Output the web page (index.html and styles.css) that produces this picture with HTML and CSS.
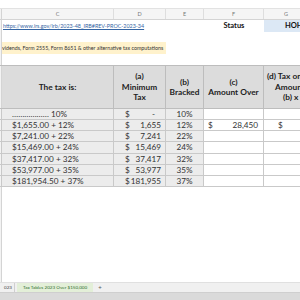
FILE: index.html
```html
<!DOCTYPE html>
<html lang="en">
<head>
    <meta charset="UTF-8">
    <title>Tax Tables 2023 Over $150,000</title>
    <link rel="stylesheet" href="styles.css">
</head>
<body>
    <div class="formula"></div>
    <div class="colheads">
        <div class="edge"></div>
        <div class="ch">C</div>
        <div class="ch">D</div>
        <div class="ch">E</div>
        <div class="ch">F</div>
        <div class="ch last">G</div>
    </div>
    <div class="sheet">
        <div class="row r1">
            <div class="edge"></div>
            <div class="cell link wide">https://www.irs.gov/irb/2023-48_IRB#REV-PROC-2023-34</div>
            <div class="cell"></div>
            <div class="cell status">Status</div>
            <div class="cell hoh">HOH</div>
        </div>
        <div class="row r2"><div class="edge"></div></div>
        <div class="row r3">
            <div class="edge"></div>
            <div class="cell note">vidends, Form 2555, Form 8651 &amp; other alternative tax computations</div>
        </div>
        <div class="row r4"><div class="edge"></div></div>

        <div class="row thead">
            <div class="edge"></div>
            <div class="th">The tax is:</div>
            <div class="th">(a)<br>Minimum<br>Tax</div>
            <div class="th">(b)<br>Bracked</div>
            <div class="th">(c)<br>Amount Over</div>
            <div class="th left">
                <span class="l1">(d) Tax on</span>
                <span class="l2">Amount Over</span>
                <span class="l3">(b) x (c)</span>
            </div>
        </div>

        <div class="row td">
            <div class="edge"></div>
            <div class="c">……………… 10%</div>
            <div class="d acc"><span>$</span><span class="dash">-</span></div>
            <div class="e">10%</div>
            <div class="f"></div>
            <div class="g"></div>
        </div>
        <div class="row td">
            <div class="edge"></div>
            <div class="c">$1,655.00 + 12%</div>
            <div class="d acc"><span>$</span><span>1,655</span></div>
            <div class="e">12%</div>
            <div class="f acc"><span>$</span><span>28,450</span></div>
            <div class="g acc"><span>$</span></div>
        </div>
        <div class="row td">
            <div class="edge"></div>
            <div class="c">$7,241.00 + 22%</div>
            <div class="d acc"><span>$</span><span>7,241</span></div>
            <div class="e">22%</div>
            <div class="f"></div>
            <div class="g"></div>
        </div>
        <div class="row td">
            <div class="edge"></div>
            <div class="c">$15,469.00 + 24%</div>
            <div class="d acc"><span>$</span><span>15,469</span></div>
            <div class="e">24%</div>
            <div class="f"></div>
            <div class="g"></div>
        </div>
        <div class="row td">
            <div class="edge"></div>
            <div class="c">$37,417.00 + 32%</div>
            <div class="d acc"><span>$</span><span>37,417</span></div>
            <div class="e">32%</div>
            <div class="f"></div>
            <div class="g"></div>
        </div>
        <div class="row td">
            <div class="edge"></div>
            <div class="c">$53,977.00 + 35%</div>
            <div class="d acc"><span>$</span><span>53,977</span></div>
            <div class="e">35%</div>
            <div class="f"></div>
            <div class="g"></div>
        </div>
        <div class="row td">
            <div class="edge"></div>
            <div class="c">$181,954.50 + 37%</div>
            <div class="d acc"><span>$</span><span>181,955</span></div>
            <div class="e">37%</div>
            <div class="f"></div>
            <div class="g"></div>
        </div>
        <div class="blank"><div class="edge"></div></div>
    </div>
    <div class="tabs">
        <div class="tab prev">023</div>
        <div class="tab active">Tax Tables 2023 Over $150,000</div>
        <div class="plus">+</div>
    </div>
    <div class="status-bar"></div>
</body>
</html>
```

FILE: styles.css
```css
body { margin: 0; width: 300px; height: 300px; overflow: hidden; background: #ffffff; font-family: Lato, 'Open Sans', sans-serif; color: #222; display: flex; flex-direction: column; }

.formula { height: 9px; border-bottom: 1px solid #e2e2e2; box-sizing: border-box; }

.colheads, .row { display: grid; grid-template-columns: 2px 112px 52px 38px 60px 36px; }
.colheads { height: 11px; background: #f5f5f5; border-bottom: 1px solid #d4d4d4; box-sizing: border-box; }
.colheads .ch { font-size: 5.5px; color: #777; text-align: center; line-height: 10px; border-right: 1px solid #dedede; }
.colheads .last { border-right: none; text-align: left; padding-left: 20px; }
.edge { border-right: 1px solid #d4d4d4; background: #f3f3f3; }

.sheet { display: flex; flex-direction: column; flex: 1; }
.cell { font-size: 6px; white-space: nowrap; line-height: 12px; }
.r1 { height: 12px; }
.r1 .wide { grid-column: 2 / 4; }
.link { color: #3465a4; text-decoration: underline; padding-left: 1px; font-size: 5.4px; }
.status { grid-column: 5; font-weight: 700; font-size: 7.5px; text-align: center; color: #111; }
.hoh { grid-column: 6; background: #dce8f5; font-weight: 700; font-size: 7.5px; padding-left: 21px; color: #111; overflow: hidden; }
.r2 { height: 10px; }
.r3 { height: 12px; }
.note { grid-column: 2 / 4; background: #fff2cc; font-size: 5.3px; line-height: 12px; overflow: hidden; color: #333; }
.r4 { height: 11px; }

.thead { height: 44px; background: #dcdcdc; border-top: 1px solid #bdbdbd; border-bottom: 1px solid #bdbdbd; box-sizing: border-box; }
.th { display: flex; align-items: center; justify-content: center; text-align: center; font-weight: 700; font-size: 8.3px; line-height: 10.5px; border-right: 1px solid #bdbdbd; white-space: nowrap; overflow: hidden; color: #222; }
.th.left { flex-direction: column; align-items: flex-start; justify-content: center; text-align: left; border-right: none; }
.th .l1 { padding-left: 3px; }
.th .l2 { padding-left: 11px; }
.th .l3 { padding-left: 19px; }

.td { height: 11.15px; font-size: 8.2px; line-height: 11px; border-bottom: 1px solid #c9c9c9; box-sizing: border-box; color: #333; }
.td > div { border-right: 1px solid #c9c9c9; white-space: nowrap; overflow: hidden; }
.td .c, .td .d, .td .e { background: #ececec; }
.td .c { padding-left: 10px; }
.td .e { text-align: center; }
.td .g { border-right: none; }
.acc { display: flex; justify-content: space-between; padding: 0 4px 0 11px; }
.f.acc { padding: 0 5px 0 4px; }
.g.acc { padding-left: 14px; }
.dash { padding-right: 6px; }

.blank { flex: 1; display: grid; grid-template-columns: 2px 1fr; }

.tabs { height: 9px; background: #f0f0f0; border-top: 1px solid #e0e0e0; display: flex; align-items: center; font-size: 4.6px; color: #444; }
.tab { height: 9px; line-height: 9px; white-space: nowrap; }
.prev { width: 12px; overflow: hidden; direction: rtl; border-right: 1px solid #cfcfcf; padding-right: 2px; }
.active { background: #e3efd8; color: #2c6e2c; padding: 0 6px; margin-left: 2px; }
.plus { padding-left: 5px; font-size: 6px; color: #555; }
.status-bar { height: 7px; background: #dadada; border-top: 1px solid #cfcfcf; }
```
